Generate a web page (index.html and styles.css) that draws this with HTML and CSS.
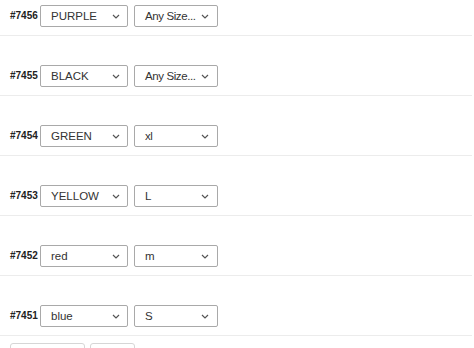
FILE: index.html
```html
<!DOCTYPE html>
<html lang="en">
<head>
  <meta charset="UTF-8">
  <title>Variants</title>
  <link rel="stylesheet" href="styles.css">
</head>
<body>

  <div class="variant-list">
    <div class="variant-row">
      <span class="variant-id">#7456</span>
      <div class="select color-select"><span class="select-text">PURPLE</span><svg class="chevron" viewBox="0 0 8 5"><path d="M1 1l3 3 3-3"/></svg></div>
      <div class="select size-select"><span class="select-text">Any Size...</span><svg class="chevron" viewBox="0 0 8 5"><path d="M1 1l3 3 3-3"/></svg></div>
    </div>
    <div class="variant-row">
      <span class="variant-id">#7455</span>
      <div class="select color-select"><span class="select-text">BLACK</span><svg class="chevron" viewBox="0 0 8 5"><path d="M1 1l3 3 3-3"/></svg></div>
      <div class="select size-select"><span class="select-text">Any Size...</span><svg class="chevron" viewBox="0 0 8 5"><path d="M1 1l3 3 3-3"/></svg></div>
    </div>
    <div class="variant-row">
      <span class="variant-id">#7454</span>
      <div class="select color-select"><span class="select-text">GREEN</span><svg class="chevron" viewBox="0 0 8 5"><path d="M1 1l3 3 3-3"/></svg></div>
      <div class="select size-select"><span class="select-text">xl</span><svg class="chevron" viewBox="0 0 8 5"><path d="M1 1l3 3 3-3"/></svg></div>
    </div>
    <div class="variant-row">
      <span class="variant-id">#7453</span>
      <div class="select color-select"><span class="select-text">YELLOW</span><svg class="chevron" viewBox="0 0 8 5"><path d="M1 1l3 3 3-3"/></svg></div>
      <div class="select size-select"><span class="select-text">L</span><svg class="chevron" viewBox="0 0 8 5"><path d="M1 1l3 3 3-3"/></svg></div>
    </div>
    <div class="variant-row">
      <span class="variant-id">#7452</span>
      <div class="select color-select"><span class="select-text">red</span><svg class="chevron" viewBox="0 0 8 5"><path d="M1 1l3 3 3-3"/></svg></div>
      <div class="select size-select"><span class="select-text">m</span><svg class="chevron" viewBox="0 0 8 5"><path d="M1 1l3 3 3-3"/></svg></div>
    </div>
    <div class="variant-row">
      <span class="variant-id">#7451</span>
      <div class="select color-select"><span class="select-text">blue</span><svg class="chevron" viewBox="0 0 8 5"><path d="M1 1l3 3 3-3"/></svg></div>
      <div class="select size-select"><span class="select-text">S</span><svg class="chevron" viewBox="0 0 8 5"><path d="M1 1l3 3 3-3"/></svg></div>
    </div>
  </div>

  <div class="actions">
    <button class="btn btn-wide"></button>
    <button class="btn btn-narrow"></button>
  </div>

</body>
</html>
```

FILE: styles.css
```css
body {
  margin: 0;
  background: #ffffff;
  color: #333333;
  font-family: "Liberation Sans", Arial, sans-serif;
}

.variant-list {
  margin-right: 2px;
}

.variant-row {
  display: flex;
  align-items: center;
  padding: 29px 0 8px 10px;
  border-bottom: 1px solid #ececec;
}

.variant-row:first-child {
  padding-top: 5px;
}

.variant-id {
  font-size: 10px;
  font-weight: bold;
  color: #222222;
  width: 30px;
  margin-top: -1px;
}

.select {
  display: flex;
  align-items: center;
  height: 20px;
  border: 1px solid #a9a9a9;
  border-radius: 2px;
  padding: 0 7px 0 10px;
  font-size: 11.5px;
  color: #333333;
}

.color-select {
  width: 69px;
}

.size-select {
  width: 64px;
  margin-left: 6px;
  padding-right: 8px;
  letter-spacing: -0.4px;
}

.select-text {
  white-space: nowrap;
}

.chevron {
  width: 8px;
  height: 5px;
  margin-left: auto;
  flex-shrink: 0;
  fill: none;
  stroke: #555555;
  stroke-width: 1.2;
}

.actions {
  display: flex;
  gap: 5px;
  padding: 7px 0 0 10px;
}

.btn {
  height: 20px;
  background: #ffffff;
  border: 1px solid #d6d6d6;
  border-radius: 3px;
  padding: 0;
}

.btn-wide {
  width: 75px;
}

.btn-narrow {
  width: 45px;
}
```
